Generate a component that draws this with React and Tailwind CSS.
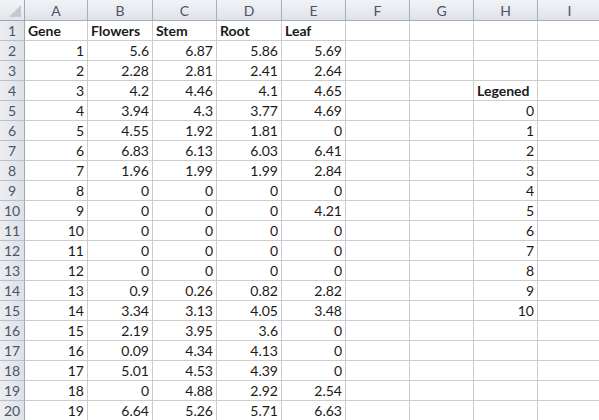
import React from 'react';

const cols = ['A', 'B', 'C', 'D', 'E', 'F', 'G', 'H', 'I'];

const data = [
  ['Gene', 'Flowers', 'Stem', 'Root', 'Leaf'],
  [1, 5.6, 6.87, 5.86, 5.69],
  [2, 2.28, 2.81, 2.41, 2.64],
  [3, 4.2, 4.46, 4.1, 4.65],
  [4, 3.94, 4.3, 3.77, 4.69],
  [5, 4.55, 1.92, 1.81, 0],
  [6, 6.83, 6.13, 6.03, 6.41],
  [7, 1.96, 1.99, 1.99, 2.84],
  [8, 0, 0, 0, 0],
  [9, 0, 0, 0, 4.21],
  [10, 0, 0, 0, 0],
  [11, 0, 0, 0, 0],
  [12, 0, 0, 0, 0],
  [13, 0.9, 0.26, 0.82, 2.82],
  [14, 3.34, 3.13, 4.05, 3.48],
  [15, 2.19, 3.95, 3.6, 0],
  [16, 0.09, 4.34, 4.13, 0],
  [17, 5.01, 4.53, 4.39, 0],
  [18, 0, 4.88, 2.92, 2.54],
  [19, 6.64, 5.26, 5.71, 6.63],
];

// column H: "Legened" on row 4, then 0..10 on rows 5-15
const legend = (row) => {
  if (row === 4) return 'Legened';
  if (row >= 5 && row <= 15) return row - 5;
  return null;
};

const Cell = ({ value }) => {
  const isText = typeof value === 'string';
  return (
    <div
      className={`h-[20px] border-r border-b border-[#cdcdcd] bg-white flex items-end pb-[2px] overflow-hidden whitespace-nowrap px-[3px] text-[14px] leading-none text-[#1a1a1a] ${
        isText ? 'justify-start font-bold' : 'justify-end'
      }`}
    >
      {value === null || value === undefined ? '' : value}
    </div>
  );
};

export default function App() {
  return (
    <div
      className="w-[599px] h-[420px] overflow-hidden bg-white"
      style={{ fontFamily: 'Lato, "Open Sans", sans-serif' }}
    >
      <div className="grid grid-cols-[25px_63px_65px_64px_65px_64px_64px_64px_64px_64px]">
        {/* corner */}
        <div className="h-[21px] border-r border-b border-[#9ea7b3] bg-gradient-to-b from-[#f3f4f6] to-[#e2e5ea] flex items-end justify-end p-[3px]">
          <svg width="12" height="12" viewBox="0 0 12 12">
            <polygon points="12,0 12,12 0,12" fill="#c4c9d1" />
          </svg>
        </div>
        {cols.map((c) => (
          <div
            key={c}
            className="h-[21px] border-r border-b border-[#a6aeb9] bg-gradient-to-b from-[#f1f3f6] to-[#dfe3e9] flex items-center justify-center text-[14px] text-[#4a5566]"
          >
            {c}
          </div>
        ))}

        {Array.from({ length: 20 }, (_, i) => {
          const row = i + 1;
          const values = data[i];
          return (
            <React.Fragment key={row}>
              <div className="h-[20px] border-r border-b border-r-[#9ea7b3] border-b-[#b9c0ca] bg-gradient-to-r from-[#eceef1] to-[#dde1e7] flex items-center justify-center text-[14px] text-[#4a5566]">
                {row}
              </div>
              {values.map((v, j) => (
                <Cell key={j} value={v} />
              ))}
              <Cell value={null} />
              <Cell value={null} />
              <Cell value={legend(row)} />
              <Cell value={null} />
            </React.Fragment>
          );
        })}
      </div>
    </div>
  );
}
